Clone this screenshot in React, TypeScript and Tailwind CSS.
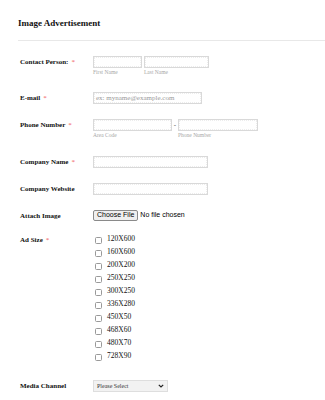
import React from 'react';

const sizes = ['120X600', '160X600', '200X200', '250X250', '300X250', '336X280', '450X50', '468X60', '480X70', '728X90'];

const Label = ({ text, required }: { text: string; required?: boolean }) => (
  <div className="w-[75px] shrink-0 h-[12px] flex items-center pl-[2px] text-[7px] font-bold text-[#111] whitespace-nowrap">
    {text}
    {required && <span className="ml-[3px] font-normal text-[#f0585a]">*</span>}
  </div>
);

const Box = ({ w, placeholder }: { w: string; placeholder?: string }) => (
  <div
    className={`${w} h-[12px] border border-[#d9d9d9] outline-1 outline-dotted outline-[#ededed] -outline-offset-2 flex items-center pl-[2px] text-[7px] text-[#9a9a9a] whitespace-nowrap overflow-hidden`}
  >
    {placeholder}
  </div>
);

const Sub = ({ text }: { text: string }) => (
  <div className="mt-[1px] text-[5.5px] leading-[7px] text-[#a8a8a8]">{text}</div>
);

const App: React.FC = () => {
  return (
    <div className="w-[325px] h-[400px] bg-white overflow-hidden" style={{ fontFamily: '"Liberation Serif", serif' }}>
      <div className="ml-[18px] h-[41px] border-b border-[#e8e8e8] pt-[17px]">
        <div className="text-[9px] leading-[13px] font-bold text-[#111]">Image Advertisement</div>
      </div>

      <div className="pl-[18px] pt-[15px]">
        {/* contact person */}
        <div className="flex h-[36px]">
          <Label text="Contact Person:" required />
          <div className="flex gap-[2px]">
            <div>
              <Box w="w-[49px]" />
              <Sub text="First Name" />
            </div>
            <div>
              <Box w="w-[65px]" />
              <Sub text="Last Name" />
            </div>
          </div>
        </div>

        {/* email */}
        <div className="flex h-[27px]">
          <Label text="E-mail" required />
          <Box w="w-[109px]" placeholder="ex: myname@example.com" />
        </div>

        {/* phone */}
        <div className="flex h-[37px]">
          <Label text="Phone Number" required />
          <div className="flex">
            <div>
              <Box w="w-[79px]" />
              <Sub text="Area Code" />
            </div>
            <div className="w-[6px] h-[12px] flex items-center justify-center text-[7px] text-[#333]">-</div>
            <div>
              <Box w="w-[80px]" />
              <Sub text="Phone Number" />
            </div>
          </div>
        </div>

        <div className="flex h-[27px]">
          <Label text="Company Name" required />
          <Box w="w-[115px]" />
        </div>

        <div className="flex h-[27px]">
          <Label text="Company Website" />
          <Box w="w-[115px]" />
        </div>

        {/* attach image */}
        <div className="flex h-[24px]">
          <Label text="Attach Image" />
          <div className="flex items-center h-[11px]" style={{ fontFamily: '"Liberation Sans", sans-serif' }}>
            <div className="h-[11px] px-[3px] flex items-center bg-[#efefef] border border-[#8a8a8a] rounded-[2px] text-[7px] text-black">
              Choose File
            </div>
            <span className="ml-[2px] text-[7px] text-black">No file chosen</span>
          </div>
        </div>

        {/* ad size */}
        <div className="flex h-[146px]">
          <div className="w-[75px] shrink-0 h-[13px] flex items-center pl-[2px] text-[7px] font-bold text-[#111]">
            Ad Size<span className="ml-[3px] font-normal text-[#f0585a]">*</span>
          </div>
          <div className="flex flex-col pl-[2px]">
            {sizes.map((s) => (
              <div key={s} className="h-[13px] flex items-center">
                <span className="w-[7px] h-[7px] border border-[#999] rounded-[1.5px] bg-white" />
                <span className="ml-[5px] mb-[3px] text-[7.5px] text-[#111]">{s}</span>
              </div>
            ))}
          </div>
        </div>

        {/* media channel */}
        <div className="flex h-[20px]">
          <Label text="Media Channel" />
          <div className="w-[75px] h-[12px] border border-[#dedede] bg-[#f2f2f2] flex items-center justify-between pl-[3px] pr-[3px]">
            <span className="text-[6px] text-[#333]">Please Select</span>
            <svg width="6" height="4" viewBox="0 0 6 4">
              <path d="M0.8 0.8 L3 3 L5.2 0.8" stroke="#222" strokeWidth="1.2" fill="none" />
            </svg>
          </div>
        </div>
      </div>
    </div>
  );
};

export default App;
